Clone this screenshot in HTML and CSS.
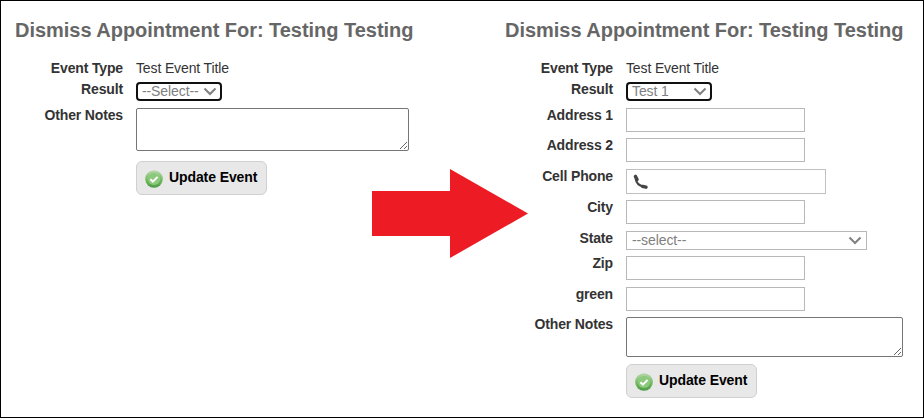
FILE: index.html
```html
<!DOCTYPE html>
<html lang="en">
<head>
	<meta charset="UTF-8">
	<title>Dismiss Appointment</title>
	<link rel="stylesheet" href="styles.css">
</head>
<body>
	<div class="frame">
		<div class="panel">
			<h2 class="title">Dismiss Appointment For: Testing Testing</h2>
			<div class="row row-text">
				<label>Event Type</label>
				<span class="value">Test Event Title</span>
			</div>
			<div class="row">
				<label>Result</label>
				<select class="result"><option>--Select--</option></select>
			</div>
			<div class="row">
				<label>Other Notes</label>
				<textarea class="notes"></textarea>
			</div>
			<div class="row">
				<label></label>
				<button class="update">
					<svg class="check" viewBox="0 0 20 20"><use href="#check-icon"/></svg>
					<span>Update Event</span>
				</button>
			</div>
		</div>
		<div class="panel">
			<h2 class="title">Dismiss Appointment For: Testing Testing</h2>
			<div class="row row-text">
				<label>Event Type</label>
				<span class="value">Test Event Title</span>
			</div>
			<div class="row">
				<label>Result</label>
				<select class="result"><option>Test 1</option></select>
			</div>
			<div class="row">
				<label>Address 1</label>
				<input type="text" class="field">
			</div>
			<div class="row">
				<label>Address 2</label>
				<input type="text" class="field">
			</div>
			<div class="row">
				<label>Cell Phone</label>
				<div class="phone">
					<svg class="phone-icon" viewBox="0 0 15 15">
						<path class="handset" d="M2.6 4.5C3.2 8.6 6.4 11.8 10.5 12.6"/>
						<path class="handset-end" d="M2.4 2.4L4.1 5.6"/>
						<path class="handset-end" d="M9.6 12.4L13 13.2"/>
					</svg>
				</div>
			</div>
			<div class="row">
				<label>City</label>
				<input type="text" class="field">
			</div>
			<div class="row">
				<label>State</label>
				<select class="state"><option>--select--</option></select>
			</div>
			<div class="row">
				<label>Zip</label>
				<input type="text" class="field">
			</div>
			<div class="row">
				<label>green</label>
				<input type="text" class="field">
			</div>
			<div class="row">
				<label>Other Notes</label>
				<textarea class="notes notes-wide"></textarea>
			</div>
			<div class="row">
				<label></label>
				<button class="update">
					<svg class="check" viewBox="0 0 20 20"><use href="#check-icon"/></svg>
					<span>Update Event</span>
				</button>
			</div>
		</div>
		<svg class="arrow" viewBox="0 0 156 89"><polygon points="0,22 78,22 78,0 156,44.5 78,89 78,67 0,67"/></svg>
	</div>

	<svg class="defs" width="0" height="0">
		<defs>
			<linearGradient id="green" x1="0" y1="0" x2="0" y2="1">
				<stop offset="0" stop-color="#b9d8ad"/>
				<stop offset="0.6" stop-color="#6cb85a"/>
				<stop offset="1" stop-color="#4c9a45"/>
			</linearGradient>
			<g id="check-icon">
				<circle cx="10" cy="10" r="9.8" fill="url(#green)"/>
				<circle cx="10" cy="10" r="6.8" fill="#8cc97c"/>
				<path d="M6 10.2l2.8 2.8 5.2-5.4" fill="none" stroke="#fff" stroke-width="2.2"/>
			</g>
		</defs>
	</svg>
</body>
</html>
```

FILE: styles.css
```css
*{
	margin: 0;
	padding: 0;
	box-sizing: border-box;
}
html,body{
	height: 100%;
}
body{
	background-color: #fff;
	font-family: "Liberation Sans", Arial, sans-serif;
	font-size: 14px;
	color: #333;
}
.frame{
	display: flex;
	height: 418px;
	border: 1px solid #000;
	position: relative;
}
.panel{
	width: 490px;
	padding: 18px 0 0 14px;
}
.panel:last-of-type{
	flex: 1;
}
.title{
	font-size: 20px;
	line-height: 23px;
	font-weight: bold;
	letter-spacing: -0.03px;
	color: #666;
	margin-bottom: 18px;
}
.row{
	display: flex;
	align-items: flex-start;
	gap: 13px;
	margin-bottom: 6.5px;
}
.row-text{
	height: 16px;
	margin-bottom: 6px;
}
.row label{
	width: 108px;
	line-height: 15px;
	font-weight: bold;
	letter-spacing: -0.15px;
	text-align: right;
}
.row-text label{
	line-height: 16px;
}
.value{
	line-height: 16px;
	letter-spacing: -0.13px;
}
.result,
.state{
	appearance: none;
	height: 19px;
	background-color: #fff;
	background-image: url("data:image/svg+xml,%3Csvg xmlns='http://www.w3.org/2000/svg' width='14' height='9'%3E%3Cpath d='M1.5 1.5L7 7l5.5-5.5' fill='none' stroke='%23808080' stroke-width='2'/%3E%3C/svg%3E");
	background-repeat: no-repeat;
	color: #808080;
	font: 14px/15px "Liberation Sans", Arial, sans-serif;
	letter-spacing: -0.1px;
}
.result{
	width: 86px;
	border: 2px solid #101010;
	border-radius: 4px;
	padding-left: 4px;
	background-position: right 3px center;
}
.state{
	width: 241px;
	border: 1px solid #b8b8b8;
	padding-left: 5px;
	background-position: right 4px center;
}
.field{
	width: 179px;
	height: 24px;
	border: 1px solid #b8b8b8;
	background-color: #fff;
}
.phone{
	display: flex;
	align-items: center;
	width: 200px;
	height: 25px;
	border: 1px solid #c0c0c0;
	padding-left: 6px;
}
.phone-icon{
	width: 15px;
	height: 15px;
	margin-top: 1px;
}
.handset{
	fill: none;
	stroke: #444;
	stroke-width: 2;
}
.handset-end{
	fill: none;
	stroke: #444;
	stroke-width: 3.4;
	stroke-linecap: round;
}
.notes{
	display: block;
	width: 273px;
	height: 43px;
	margin-bottom: 3px;
	border: 1px solid #767676;
	border-radius: 2px;
}
.notes-wide{
	width: 277px;
	height: 40px;
	margin-bottom: 0;
}
.update{
	display: flex;
	align-items: center;
	gap: 6px;
	width: 131px;
	height: 34px;
	padding-left: 8px;
	margin-top: 0.5px;
	background-color: #e8e8e8;
	border: 1px solid #d0d0d0;
	border-radius: 6px;
	color: #000;
	font: bold 14px "Liberation Sans", Arial, sans-serif;
	letter-spacing: -0.1px;
}
.update span{
	margin-top: -2px;
}
.check{
	width: 18px;
	height: 18px;
	margin-top: 2px;
}
.arrow{
	position: absolute;
	left: 371px;
	top: 168px;
	width: 156px;
	height: 89px;
	fill: #ed1c24;
}
.defs{
	position: absolute;
}
```
